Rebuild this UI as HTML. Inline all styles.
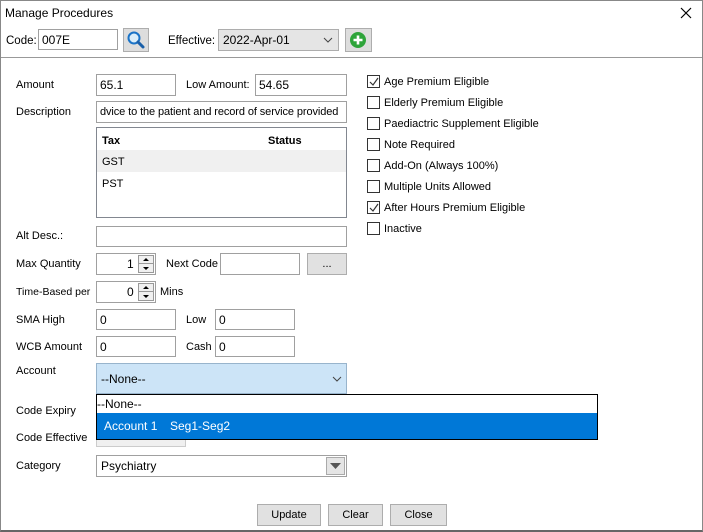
<!DOCTYPE html>
<html><head><style>
*{box-sizing:border-box;margin:0;padding:0}
body{width:703px;height:532px;background:#fff;font-family:"Liberation Sans",sans-serif;font-size:11px;color:#000;position:relative;overflow:hidden}
.a{position:absolute}
.win{left:0;top:0;width:703px;height:532px;border:1px solid #888;border-bottom:2px solid #666}
.lbl{position:absolute;line-height:14px;white-space:nowrap}
.in{position:absolute;border:1px solid #a0a0a0;background:#fff;padding-left:3px;white-space:nowrap;overflow:hidden;display:flex;align-items:center;font-size:12px}
.btn{position:absolute;border:1px solid #adadad;background:#e1e1e1;text-align:center;line-height:19px}
.cb{position:absolute;left:367px;width:13px;height:13px;border:1px solid #333;background:#fff}
.cbl{position:absolute;left:384px;line-height:14px}
</style></head><body>
<div class="a win"></div>
<div class="lbl" style="left:5px;top:6px;font-size:12px">Manage Procedures</div>
<svg class="a" style="left:680px;top:7px" width="12" height="12"><path d="M1 1L11 11M11 1L1 11" stroke="#000" stroke-width="1.2"/></svg>

<div class="lbl" style="left:6px;top:34px;font-size:11.5px">Code:</div>
<div class="in" style="left:38px;top:29px;width:80px;height:21px">007E</div>
<div class="btn" style="left:123px;top:28px;width:26px;height:24px;background:#ddd"></div>
<svg class="a" style="left:126px;top:30px" width="20" height="20"><circle cx="8" cy="8" r="5.5" fill="#dbeefa" stroke="#1a73c7" stroke-width="2"/><path d="M12 12L17 17" stroke="#1a5fa8" stroke-width="3" stroke-linecap="round"/></svg>
<div class="lbl" style="left:168px;top:34px;font-size:11.5px">Effective:</div>
<div class="in" style="left:218px;top:29px;width:121px;height:22px;background:#e5e5e5;border-color:#adadad;padding-left:4px;font-size:12px">2022-Apr-01</div>
<svg class="a" style="left:323px;top:37px" width="10" height="6"><path d="M1 1L5 5L9 1" stroke="#444" fill="none"/></svg>
<div class="btn" style="left:345px;top:28px;width:27px;height:24px;background:#ddd"></div>
<svg class="a" style="left:349px;top:31px" width="18" height="18"><circle cx="9" cy="9" r="8" fill="#2ea43a"/><path d="M9 4.5V13.5M4.5 9H13.5" stroke="#fff" stroke-width="2.6"/></svg>
<div class="a" style="left:1px;top:57px;width:701px;height:1px;background:#999"></div>

<div class="lbl" style="left:16px;top:78px">Amount</div>
<div class="in" style="left:96px;top:74px;width:80px;height:22px">65.1</div>
<div class="lbl" style="left:186px;top:78px">Low Amount:</div>
<div class="in" style="left:255px;top:74px;width:92px;height:22px">54.65</div>
<div class="lbl" style="left:16px;top:105px">Description</div>
<div class="in" style="left:96px;top:101px;width:251px;height:22px;font-size:11px;letter-spacing:-0.1px">dvice to the patient and record of service provided</div>

<div class="a" style="left:96px;top:127px;width:251px;height:91px;border:1px solid #828790;background:#fff"></div>
<div class="lbl" style="left:102px;top:134px;font-weight:bold">Tax</div>
<div class="lbl" style="left:268px;top:134px;font-weight:bold">Status</div>
<div class="a" style="left:97px;top:150px;width:249px;height:22px;background:#f0f0f0"></div>
<div class="lbl" style="left:102px;top:155px">GST</div>
<div class="lbl" style="left:102px;top:177px">PST</div>

<div class="lbl" style="left:16px;top:229px">Alt Desc.:</div>
<div class="in" style="left:96px;top:226px;width:251px;height:21px"></div>

<div class="lbl" style="left:16px;top:257px">Max Quantity</div>
<div class="in" style="left:96px;top:253px;width:60px;height:22px"></div>
<div class="lbl" style="left:127px;top:257px;font-size:12px">1</div>
<div class="a" style="left:138px;top:255px;width:16px;height:18px;border:1px solid #999;background:#f0f0f0"></div>
<div class="a" style="left:139px;top:263px;width:14px;height:1px;background:#999"></div>
<svg class="a" style="left:142px;top:257px" width="8" height="15"><path d="M1 4L4 1L7 4Z M1 10L4 13L7 10Z" fill="#000"/></svg>
<div class="lbl" style="left:166px;top:257px">Next Code</div>
<div class="in" style="left:220px;top:253px;width:80px;height:22px"></div>
<div class="btn" style="left:307px;top:253px;width:40px;height:22px;line-height:20px">...</div>

<div class="lbl" style="left:16px;top:285px;font-size:10.5px">Time-Based per</div>
<div class="in" style="left:96px;top:281px;width:60px;height:22px"></div>
<div class="lbl" style="left:127px;top:285px;font-size:12px">0</div>
<div class="a" style="left:138px;top:283px;width:16px;height:18px;border:1px solid #999;background:#f0f0f0"></div>
<div class="a" style="left:139px;top:291px;width:14px;height:1px;background:#999"></div>
<svg class="a" style="left:142px;top:285px" width="8" height="15"><path d="M1 4L4 1L7 4Z M1 10L4 13L7 10Z" fill="#000"/></svg>
<div class="lbl" style="left:160px;top:285px">Mins</div>

<div class="lbl" style="left:16px;top:313px">SMA High</div>
<div class="in" style="left:96px;top:309px;width:80px;height:21px">0</div>
<div class="lbl" style="left:186px;top:313px">Low</div>
<div class="in" style="left:215px;top:309px;width:80px;height:21px">0</div>
<div class="lbl" style="left:16px;top:340px">WCB Amount</div>
<div class="in" style="left:96px;top:336px;width:80px;height:21px">0</div>
<div class="lbl" style="left:186px;top:340px">Cash</div>
<div class="in" style="left:215px;top:336px;width:80px;height:21px">0</div>

<div class="lbl" style="left:16px;top:364px">Account</div>
<div class="in" style="left:96px;top:363px;width:251px;height:31px;background:#cce4f7;border-color:#98b4cc;padding-left:4px;font-size:12px">--None--</div>
<svg class="a" style="left:332px;top:376px" width="10" height="6"><path d="M1 1L5 5L9 1" stroke="#444" fill="none"/></svg>

<div class="lbl" style="left:16px;top:404px">Code Expiry</div>
<div class="lbl" style="left:16px;top:431px">Code Effective</div>
<div class="in" style="left:96px;top:426px;width:90px;height:21px;background:#f0f0f0;border-color:#ccc"></div>

<div class="a" style="left:96px;top:394px;width:502px;height:46px;border:1px solid #000;background:#fff"></div>
<div class="lbl" style="left:97px;top:397px;font-size:12px">--None--</div>
<div class="a" style="left:97px;top:413px;width:500px;height:26px;background:#0078d7"></div>
<div class="lbl" style="left:104px;top:419px;color:#fff;font-size:12px">Account 1</div>
<div class="lbl" style="left:170px;top:419px;color:#fff;font-size:12px">Seg1-Seg2</div>

<div class="lbl" style="left:16px;top:459px">Category</div>
<div class="in" style="left:96px;top:455px;width:251px;height:22px;padding-left:4px;font-size:12px">Psychiatry</div>
<div class="a" style="left:326px;top:457px;width:19px;height:18px;border:1px solid #aaa;background:#e5e5e5"></div>
<svg class="a" style="left:330px;top:463px" width="11" height="6"><path d="M0 0H11L5.5 6Z" fill="#555"/></svg>

<div class="btn" style="left:257px;top:504px;width:64px;height:22px;line-height:20px">Update</div>
<div class="btn" style="left:328px;top:504px;width:55px;height:22px;line-height:20px">Clear</div>
<div class="btn" style="left:390px;top:504px;width:57px;height:22px;line-height:20px">Close</div>

<div class="cb" style="top:75px"></div><svg class="a" style="left:369px;top:77px" width="10" height="10"><path d="M1 5L4 8L9 1" stroke="#333" fill="none" stroke-width="1.2"/></svg>
<div class="cbl" style="top:75px">Age Premium Eligible</div>
<div class="cb" style="top:96px"></div><div class="cbl" style="top:96px">Elderly Premium Eligible</div>
<div class="cb" style="top:117px"></div><div class="cbl" style="top:117px">Paediactric Supplement Eligible</div>
<div class="cb" style="top:138px"></div><div class="cbl" style="top:138px">Note Required</div>
<div class="cb" style="top:159px"></div><div class="cbl" style="top:159px">Add-On (Always 100%)</div>
<div class="cb" style="top:180px"></div><div class="cbl" style="top:180px">Multiple Units Allowed</div>
<div class="cb" style="top:201px"></div><svg class="a" style="left:369px;top:203px" width="10" height="10"><path d="M1 5L4 8L9 1" stroke="#333" fill="none" stroke-width="1.2"/></svg>
<div class="cbl" style="top:201px">After Hours Premium Eligible</div>
<div class="cb" style="top:222px"></div><div class="cbl" style="top:222px">Inactive</div>
</body></html>
